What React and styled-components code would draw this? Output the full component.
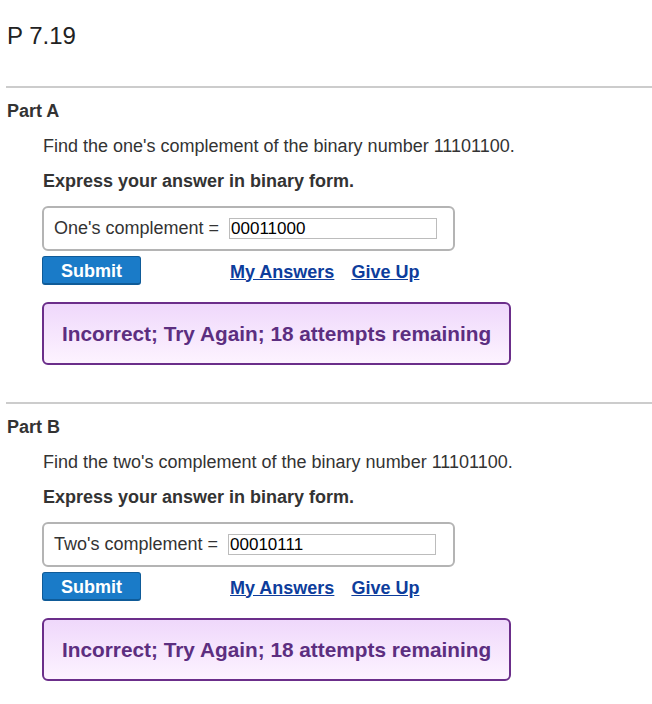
import React from "react";
import styled, { createGlobalStyle } from "styled-components";

const Global = createGlobalStyle`
  html, body { margin: 0; padding: 0; background: #fff; }
  body { font-family: "Liberation Sans", Arial, Helvetica, sans-serif; color: #333; }
`;

const Page = styled.div`
  padding: 0 0 40px 6px;
  width: 646px;
`;

const Title = styled.h1`
  margin: 22px 0 0 1px;
  font-size: 24px;
  line-height: 28px;
  font-weight: normal;
  color: #222;
`;

const Section = styled.section`
  margin-top: ${(p) => p.$top}px;
`;

const Rule = styled.div`
  height: 2px;
  background: #cccccc;
`;

const PartHeading = styled.h2`
  margin: 12px 0 0 1px;
  font-size: 18px;
  line-height: 22px;
  font-weight: bold;
  color: #333;
`;

const PartBody = styled.div`
  padding-left: 36px;
`;

const Text = styled.p`
  margin: 13px 0 0 1px;
  font-size: 18px;
  line-height: 22px;
  font-weight: ${(p) => (p.$bold ? "bold" : "normal")};
  color: #333;
`;

const AnswerBox = styled.div`
  margin-top: 14px;
  box-sizing: border-box;
  width: 413px;
  height: 45px;
  border: 2px solid #b4b4b4;
  border-radius: 6px;
  display: flex;
  align-items: center;
  padding-left: 10px;
  font-size: 18px;
  color: #333;
`;

const Label = styled.span`
  white-space: nowrap;
`;

const Input = styled.input`
  box-sizing: border-box;
  margin-left: 10px;
  width: 208px;
  height: 21px;
  border: 1px solid #bcbcbc;
  padding: 0 1px;
  font-family: "Liberation Sans", Arial, sans-serif;
  font-size: 17px;
  color: #000;
  background: #fff;
  outline: none;
`;

const ActionRow = styled.div`
  margin-top: 5px;
  display: flex;
  align-items: center;
`;

const SubmitButton = styled.button`
  box-sizing: border-box;
  width: 99px;
  height: 29px;
  background: #1a7bc8;
  border: 1px solid #0f5b98;
  border-bottom-width: 2px;
  border-radius: 3px;
  color: #fff;
  font-family: "Liberation Sans", Arial, sans-serif;
  font-weight: bold;
  font-size: 18px;
  padding: 2px 0 0;
  cursor: pointer;
`;

const Links = styled.div`
  margin-left: 89px;
  padding-top: 3px;
  display: flex;
  gap: 17px;
`;

const Link = styled.a`
  font-size: 18px;
  font-weight: bold;
  color: #0d3d9c;
  text-decoration: underline;
  cursor: pointer;
`;

const Feedback = styled.div`
  margin-top: 17px;
  box-sizing: border-box;
  width: 469px;
  height: 63px;
  border: 2px solid #6b2e8a;
  border-radius: 6px;
  background: linear-gradient(to bottom, #efd8fb, #fdf3ff);
  display: flex;
  align-items: center;
  padding-left: 18px;
  font-size: 20.8px;
  font-weight: bold;
  color: #5c2e80;
`;

const parts = [
  { name: "Part A", which: "one's", label: "One's complement =", value: "00011000", top: 36 },
  { name: "Part B", which: "two's", label: "Two's complement =", value: "00010111", top: 37 },
];

function Part({ part }) {
  return (
    <Section $top={part.top}>
      <Rule />
      <PartHeading>{part.name}</PartHeading>
      <PartBody>
        <Text>Find the {part.which} complement of the binary number 11101100.</Text>
        <Text $bold>Express your answer in binary form.</Text>
        <AnswerBox>
          <Label>{part.label}</Label>
          <Input defaultValue={part.value} />
        </AnswerBox>
        <ActionRow>
          <SubmitButton>Submit</SubmitButton>
          <Links>
            <Link>My Answers</Link>
            <Link>Give Up</Link>
          </Links>
        </ActionRow>
        <Feedback>Incorrect; Try Again; 18 attempts remaining</Feedback>
      </PartBody>
    </Section>
  );
}

export default function App() {
  return (
    <>
      <Global />
      <Page>
        <Title>P 7.19</Title>
        {parts.map((p) => (
          <Part key={p.name} part={p} />
        ))}
      </Page>
    </>
  );
}
